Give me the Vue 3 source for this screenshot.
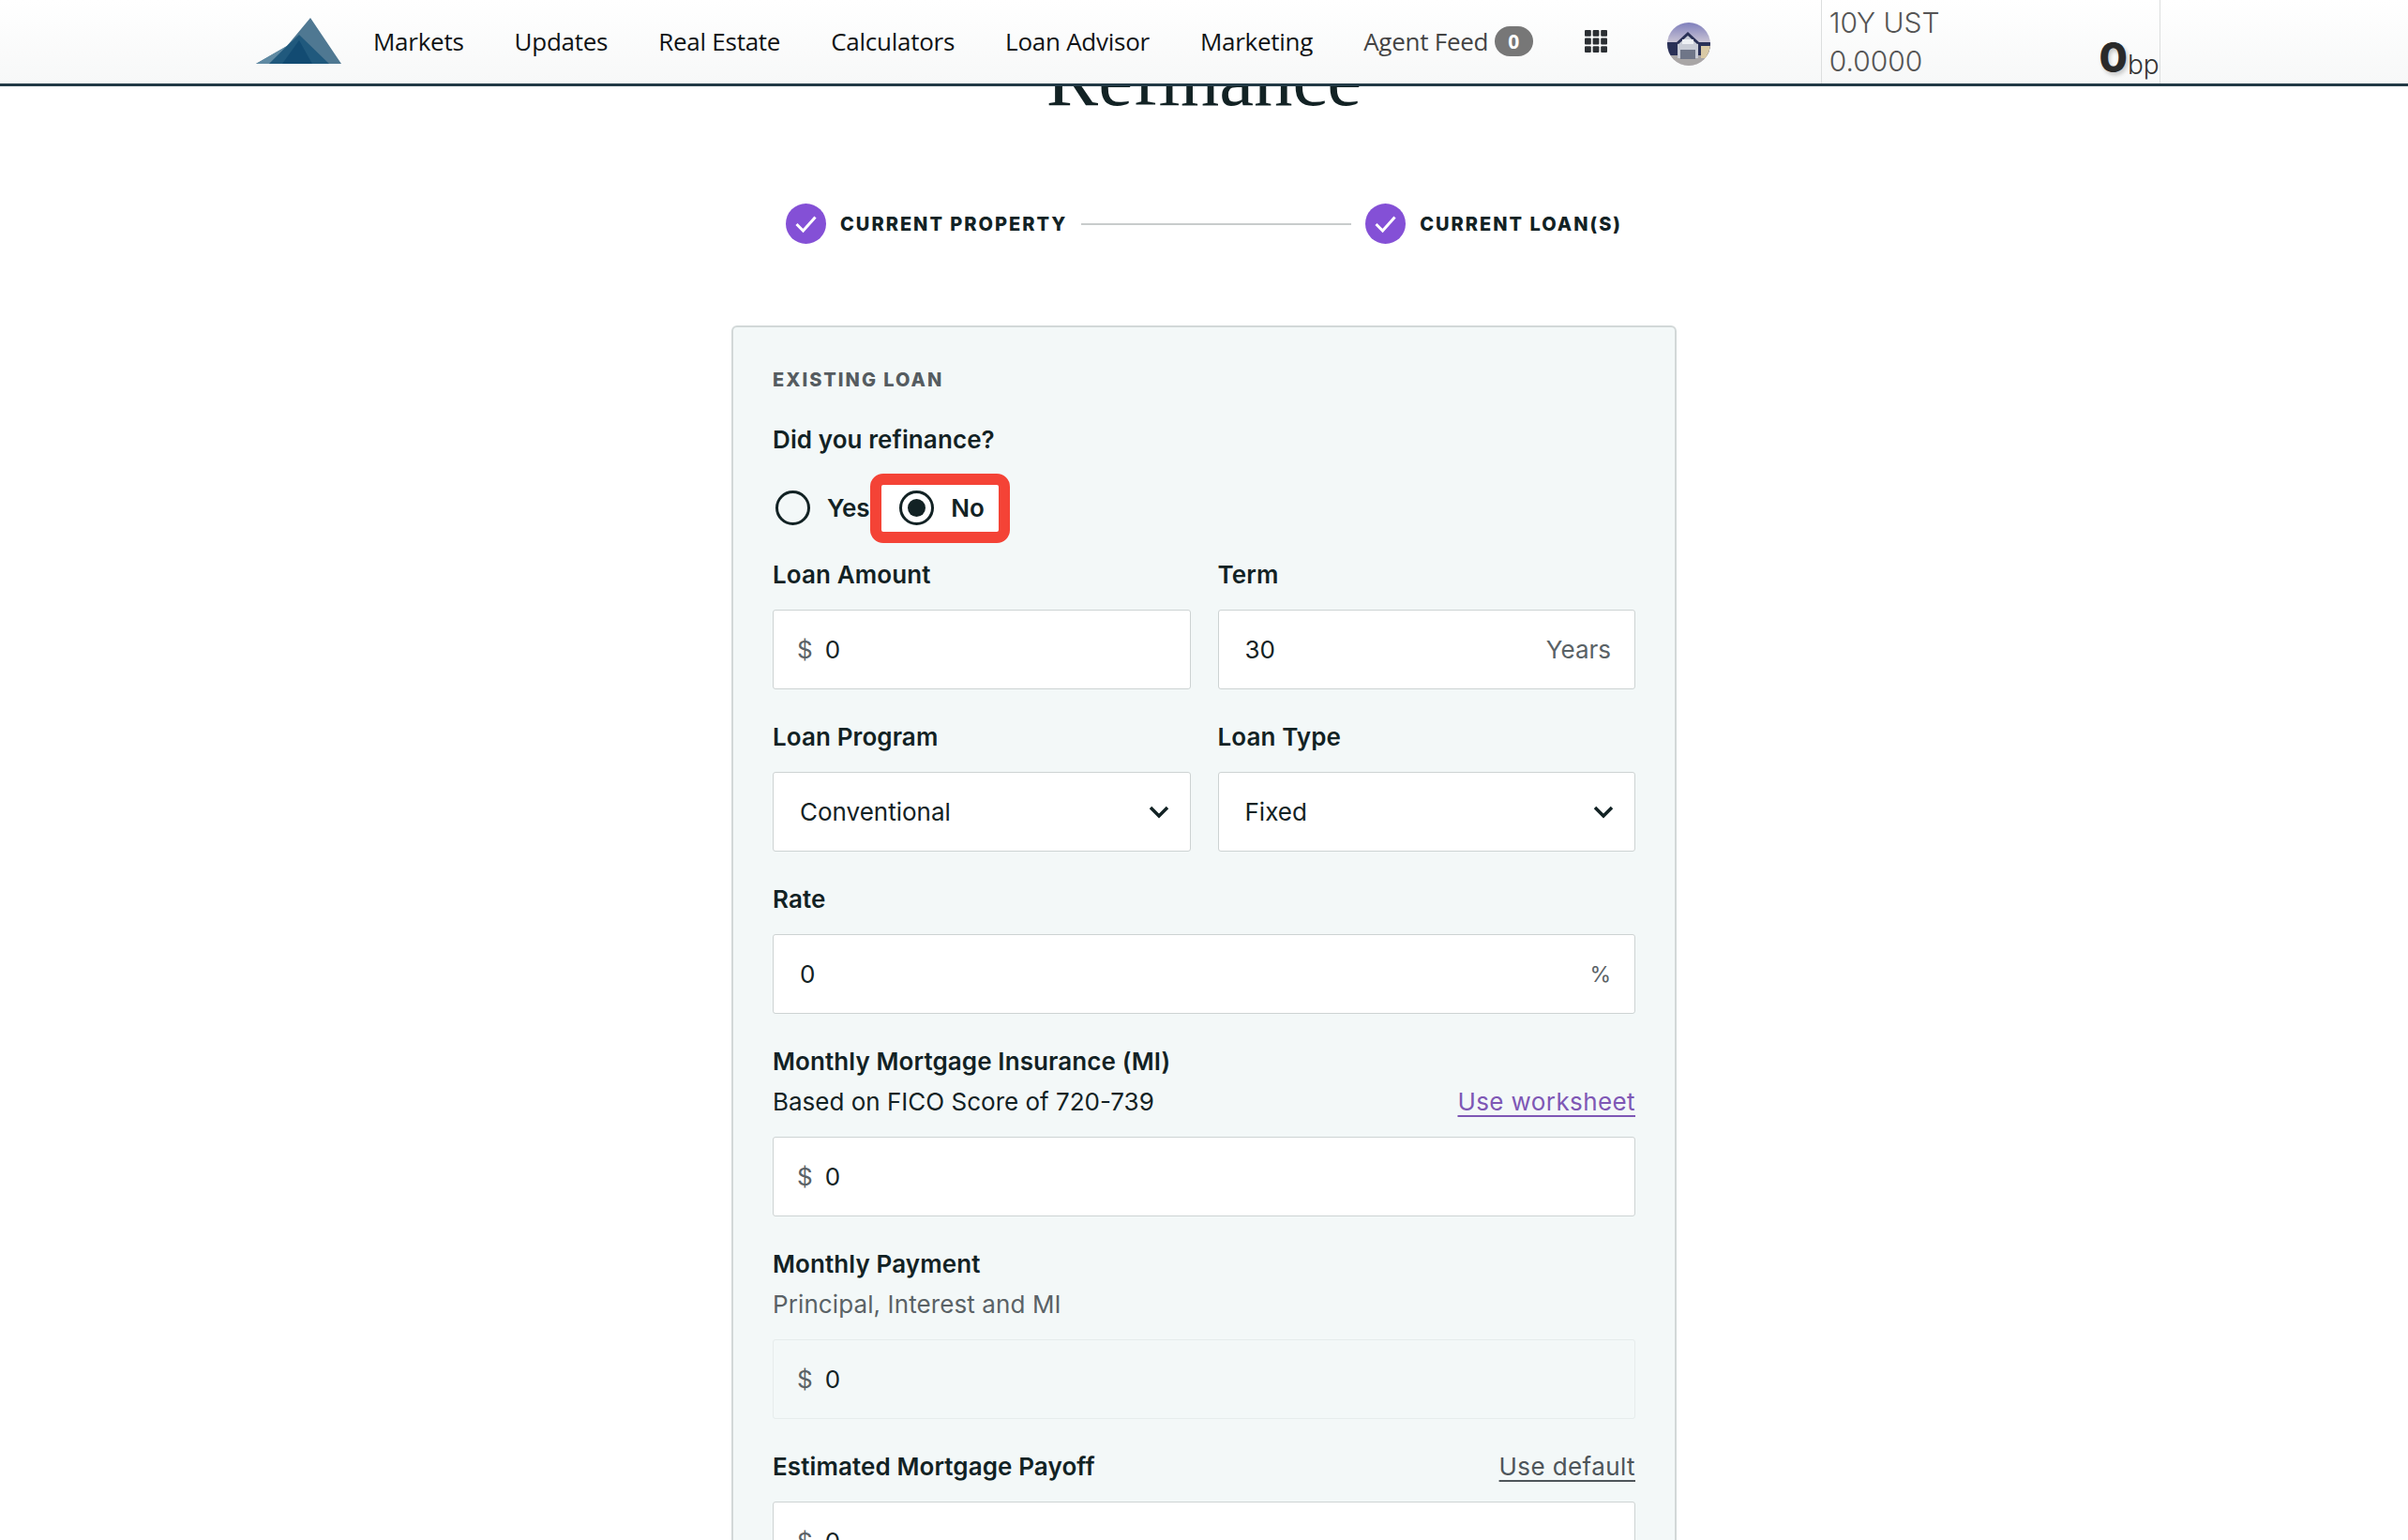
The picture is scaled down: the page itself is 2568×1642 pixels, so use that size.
<template>
  <div class="page">
    <header class="topbar">
      <svg class="logo" width="92" height="50" viewBox="0 0 92 50">
        <polygon points="0,49 33,30 58,0 91,49" fill="#4f7892" />
        <polygon points="0,49 33,30 46,18 14,49" fill="#5f8aa3" />
        <polygon points="14,49 33,30 46,18 78,49" fill="#20597d" />
        <polygon points="28,49 46,24 60,49" fill="#124b72" />
      </svg>
      <nav class="nav">
        <a v-for="item in navItems" :key="item" class="nav-link">{{ item }}</a>
        <a class="nav-link muted">Agent Feed<span class="badge">0</span></a>
      </nav>
      <svg class="grid-icon" width="24" height="24" viewBox="0 0 24 24">
        <g fill="#2b2f33">
          <rect v-for="cell in gridCells" :key="cell.id" :x="cell.x" :y="cell.y" width="6.8" height="6.8" rx="1" />
        </g>
      </svg>
      <svg class="avatar" width="46" height="46" viewBox="0 0 46 46">
        <defs>
          <clipPath id="avatar-clip"><circle cx="23" cy="23" r="23" /></clipPath>
          <linearGradient id="avatar-sky" x1="0" y1="0" x2="0" y2="1">
            <stop offset="0" stop-color="#7f7fbc" />
            <stop offset="0.5" stop-color="#cfc9d6" />
          </linearGradient>
        </defs>
        <g clip-path="url(#avatar-clip)">
          <rect width="46" height="46" fill="url(#avatar-sky)" />
          <rect y="21" width="46" height="14" fill="#2a3157" />
          <rect y="35" width="46" height="11" fill="#a9a6a6" />
          <rect x="36" y="25" width="10" height="13" fill="#d9c9a5" />
          <polygon points="11,22 22,12 33,22 33,38 11,38" fill="#c9ccd6" />
          <polygon points="9,22 22,10 35,22 32,23 22,14 12,23" fill="#2a3157" />
          <rect x="16" y="18" width="12" height="5" fill="#eef0f4" />
          <rect x="14" y="29" width="16" height="10" fill="#6f7688" />
        </g>
      </svg>
      <div class="ticker">
        <div class="ticker-values">
          <span>10Y UST</span>
          <span>0.0000</span>
        </div>
        <div class="ticker-change"><b>0</b>bp</div>
      </div>
    </header>

    <main class="content">
      <h1 class="title">Refinance</h1>

      <div class="stepper">
        <div class="step">
          <svg class="step-check" width="43" height="43" viewBox="0 0 43 43">
            <circle cx="21.5" cy="21.5" r="21.5" fill="#8450d6" />
            <path d="M11.5 22l7 7 13-14.5" fill="none" stroke="#fff" stroke-width="3" />
          </svg>
          <span>CURRENT PROPERTY</span>
        </div>
        <div class="step-line"></div>
        <div class="step">
          <svg class="step-check" width="43" height="43" viewBox="0 0 43 43">
            <circle cx="21.5" cy="21.5" r="21.5" fill="#8450d6" />
            <path d="M11.5 22l7 7 13-14.5" fill="none" stroke="#fff" stroke-width="3" />
          </svg>
          <span>CURRENT LOAN(S)</span>
        </div>
      </div>

      <section class="card">
        <div class="eyebrow">EXISTING LOAN</div>
        <div class="label refi-label">Did you refinance?</div>
        <div class="radios">
          <label class="radio">
            <span class="radio-dot"></span>
            Yes
          </label>
          <label class="radio radio-marked">
            <span class="radio-dot checked"></span>
            No
          </label>
        </div>

        <div class="two-col">
          <div>
            <div class="label">Loan Amount</div>
            <div class="field money"><span class="adorn">$</span><span>0</span></div>
          </div>
          <div>
            <div class="label">Term</div>
            <div class="field spread"><span>30</span><span class="adorn">Years</span></div>
          </div>
        </div>

        <div class="two-col">
          <div>
            <div class="label">Loan Program</div>
            <div class="field spread select">
              <span>Conventional</span>
              <svg width="22" height="14" viewBox="0 0 22 14"><path d="M2 2l9 9 9-9" fill="none" stroke="#122224" stroke-width="3.5" /></svg>
            </div>
          </div>
          <div>
            <div class="label">Loan Type</div>
            <div class="field spread select">
              <span>Fixed</span>
              <svg width="22" height="14" viewBox="0 0 22 14"><path d="M2 2l9 9 9-9" fill="none" stroke="#122224" stroke-width="3.5" /></svg>
            </div>
          </div>
        </div>

        <div class="group">
          <div class="label">Rate</div>
          <div class="field spread"><span>0</span><span class="adorn percent">%</span></div>
        </div>

        <div class="group">
          <div class="label">Monthly Mortgage Insurance (MI)</div>
          <div class="sub-row">
            <span>Based on FICO Score of 720-739</span>
            <a class="link purple">Use worksheet</a>
          </div>
          <div class="field money"><span class="adorn">$</span><span>0</span></div>
        </div>

        <div class="group">
          <div class="label">Monthly Payment</div>
          <div class="sub-row grey">Principal, Interest and MI</div>
          <div class="field money disabled"><span class="adorn">$</span><span>0</span></div>
        </div>

        <div class="group">
          <div class="label-row">
            <div class="label">Estimated Mortgage Payoff</div>
            <a class="link">Use default</a>
          </div>
          <div class="field money"><span class="adorn">$</span><span>0</span></div>
        </div>
      </section>
    </main>
  </div>
</template>

<script setup>
const navItems = ['Markets', 'Updates', 'Real Estate', 'Calculators', 'Loan Advisor', 'Marketing']

const gridCells = []
for (let row = 0; row < 3; row++) {
  for (let col = 0; col < 3; col++) {
    gridCells.push({ id: row * 3 + col, x: col * 8.6, y: row * 8.6 })
  }
}
</script>

<style>
html, body {
  margin: 0;
  background: #fff;
}
</style>

<style scoped>
.page {
  position: relative;
  width: 2568px;
  height: 1642px;
  overflow: hidden;
  font-family: Inter, "Liberation Sans", sans-serif;
  color: #122224;
  font-size: 26px;
}

.topbar {
  position: absolute;
  top: 0;
  left: 0;
  right: 0;
  z-index: 2;
  height: 89px;
  display: flex;
  align-items: center;
  padding-left: 273px;
  background: linear-gradient(#fff, #f7f8f8);
  border-bottom: 3px solid #223a46;
}

.logo {
  margin-top: -2px;
}

.nav {
  display: flex;
  margin-left: 33px;
  gap: 54px;
  margin-top: -2px;
}

.nav-link {
  font-family: "Open Sans", sans-serif;
  font-size: 26px;
  letter-spacing: -0.26px;
  color: #101315;
  display: flex;
  align-items: center;
}

.nav-link.muted {
  color: #444;
}

.badge {
  width: 41px;
  height: 32px;
  margin-left: 6.5px;
  border-radius: 16px;
  background: #777;
  color: #fff;
  font-size: 21px;
  font-weight: 700;
  letter-spacing: 0;
  display: flex;
  align-items: center;
  justify-content: center;
}

.grid-icon {
  margin-left: 55px;
  margin-top: -1px;
}

.avatar {
  margin-left: 64px;
  margin-top: 4px;
}

.ticker {
  width: 362px;
  height: 89px;
  margin-left: 118px;
  box-sizing: border-box;
  border-left: 1px solid #dcdede;
  border-right: 1px solid #dcdede;
  padding-left: 8px;
  display: flex;
  justify-content: space-between;
  color: #555;
  font-weight: 300;
  font-size: 30px;
}

.ticker-values {
  display: flex;
  flex-direction: column;
  gap: 2px;
  line-height: 39px;
  padding-top: 5px;
}

.ticker-change {
  align-self: flex-end;
  line-height: 40px;
  font-size: 28px;
  color: #333;
}

.ticker-change b {
  font-size: 44px;
  font-weight: 800;
  color: #2a2a2a;
  text-shadow: 2px 3px 4px rgba(0, 0, 0, 0.2);
  position: relative;
  top: -2px;
}

.content {
  padding-top: 39px;
}

.title {
  margin: 0;
  text-align: center;
  font-family: "Liberation Serif", serif;
  font-weight: 400;
  font-size: 83px;
  line-height: 90px;
  color: #122224;
}

.stepper {
  display: flex;
  align-items: center;
  justify-content: center;
  margin-top: 88px;
  gap: 15px;
}

.step {
  display: flex;
  align-items: center;
  gap: 15px;
  font-size: 20px;
  font-weight: 800;
  letter-spacing: 2px;
}

.step-line {
  width: 288px;
  height: 2px;
  background: #c8cccc;
}

.card {
  width: 1008px;
  box-sizing: border-box;
  margin: 87px auto 0;
  padding: 42px 42px 40px;
  background: #f3f8f8;
  border: 2px solid #d2d8d8;
  border-radius: 6px;
}

.eyebrow {
  font-size: 20px;
  font-weight: 800;
  letter-spacing: 2px;
  color: #555c60;
  line-height: 28px;
}

.label {
  font-weight: 600;
  font-size: 26px;
  line-height: 36px;
  letter-spacing: 0.1px;
}

.refi-label {
  margin-top: 32px;
}

.radios {
  display: flex;
  align-items: center;
  height: 74px;
  margin-top: 18px;
  margin-bottom: 16px;
}

.radio {
  display: flex;
  align-items: center;
  gap: 18px;
  font-weight: 600;
  padding-left: 3px;
}

.radio-marked {
  width: 149px;
  height: 74px;
  box-sizing: border-box;
  margin-left: 0.5px;
  padding: 0 0 2px 19px;
  background: #fff;
  border: 12px solid #f44336;
  border-radius: 14px;
}

.radio:first-child {
  padding-bottom: 2px;
}

.radio-dot {
  width: 37px;
  height: 37px;
  box-sizing: border-box;
  border: 3.5px solid #122224;
  border-radius: 50%;
  display: flex;
  align-items: center;
  justify-content: center;
}

.radio-dot.checked::before {
  content: '';
  width: 19px;
  height: 19px;
  border-radius: 50%;
  background: #122224;
}

.two-col {
  display: grid;
  grid-template-columns: 1fr 1fr;
  gap: 29px;
  margin-bottom: 33px;
}

.field {
  height: 85px;
  box-sizing: border-box;
  margin-top: 19px;
  padding: 0 25px 0 28px;
  background: #fff;
  border: 1.5px solid #cdd3d3;
  border-radius: 3px;
  display: flex;
  align-items: center;
  gap: 13px;
}

.field.money {
  padding-left: 25px;
}

.field.spread {
  justify-content: space-between;
}

.field.select {
  padding-right: 22px;
}

.field.disabled {
  background: transparent;
  border-color: #e6ecec;
}

.adorn {
  color: #5a6266;
}

.adorn.percent {
  font-size: 23px;
}

.group {
  margin-bottom: 33px;
}

.sub-row {
  display: flex;
  justify-content: space-between;
  line-height: 36px;
  margin-top: 7px;
}

.sub-row.grey {
  color: #5a6266;
  letter-spacing: 0.1px;
}

.label-row {
  display: flex;
  justify-content: space-between;
}

.link {
  color: #4e555a;
  line-height: 36px;
  letter-spacing: 0.4px;
  text-decoration: underline;
  text-underline-offset: 5px;
  text-decoration-thickness: 2px;
}

.link.purple {
  color: #7e57b5;
}
</style>
